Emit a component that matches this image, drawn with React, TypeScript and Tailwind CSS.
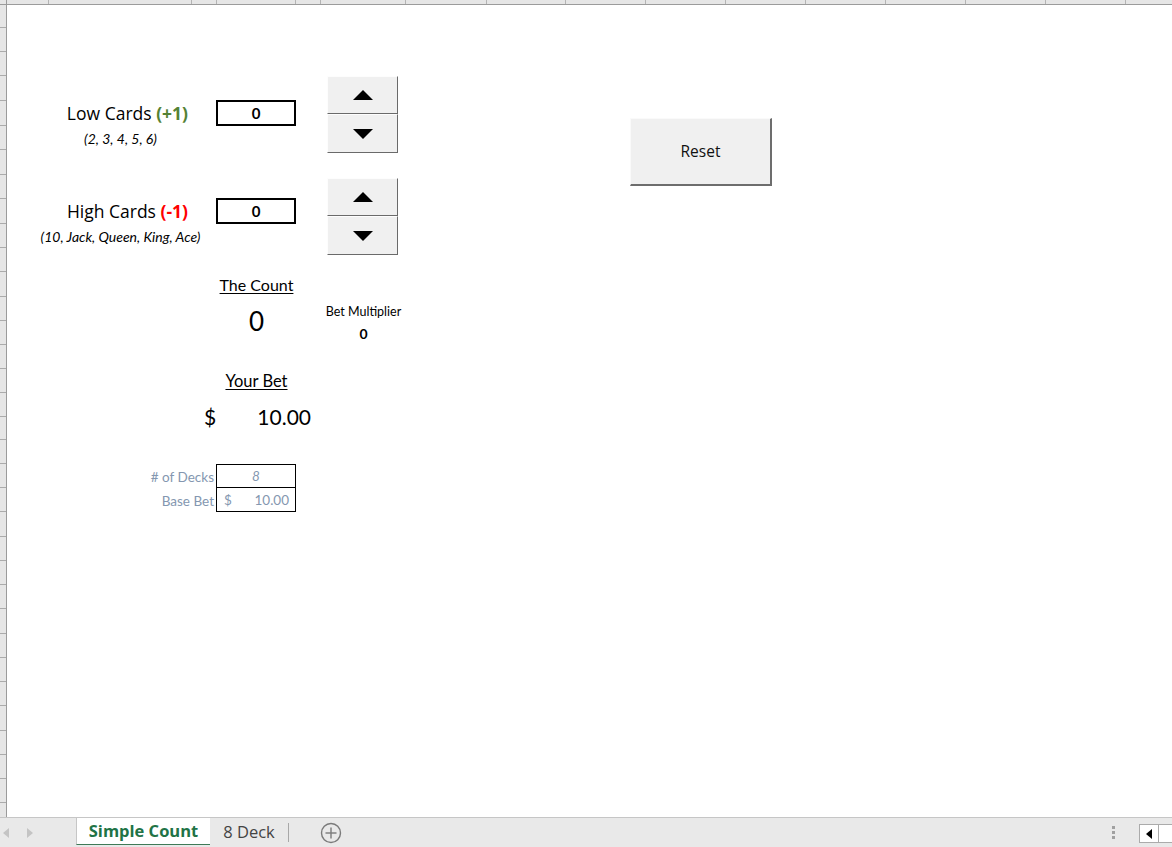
import React from "react";

const colWidths = [42, 143, 25, 79, 25, 85, 81, 79, 80, 80, 80, 80, 80, 80, 80, 80];
const rowHeights = [23, 24, 24, 25, 25, 24, 25, 24, 25, 24, 24, 25, 24, 24, 24, 24, 24, 23, 24, 24, 24, 25, 24, 24, 24, 25, 24, 24, 24, 25, 24, 24, 24, 25, 24, 24];

const body = { fontFamily: "Lato, 'Open Sans', 'Liberation Sans', sans-serif" };
const label = { fontFamily: "'Open Sans', 'Noto Sans', 'Liberation Sans', sans-serif" };

function Spinner({ top }: { top: number }) {
  return (
    <div className="absolute left-[327px] flex h-[77px] w-[71px] flex-col" style={{ top }}>
      <div className="flex h-[38px] items-center justify-center border-t border-l border-r border-b border-t-[#fdfdfd] border-l-[#fdfdfd] border-r-[#6a6a6a] border-b-[#6a6a6a] bg-[#f0f0f0]">
        <svg width="20" height="10" viewBox="0 0 20 10">
          <polygon points="10,0 20,10 0,10" fill="#000" />
        </svg>
      </div>
      <div className="flex h-[39px] items-center justify-center border-t border-l border-r border-b border-t-[#fdfdfd] border-l-[#fdfdfd] border-r-[#6a6a6a] border-b-[#6a6a6a] bg-[#f0f0f0]">
        <svg width="20" height="10" viewBox="0 0 20 10">
          <polygon points="0,0 20,0 10,10" fill="#000" />
        </svg>
      </div>
    </div>
  );
}

export default function App() {
  return (
    <div className="relative flex h-[847px] w-[1172px] flex-col overflow-hidden bg-white" style={body}>
      {/* column header strip */}
      <div className="flex h-[5px] shrink-0 border-b border-[#9b9b9b] bg-[#e6e6e6]">
        <div className="w-[7px] shrink-0 border-r border-[#9b9b9b]" />
        {colWidths.map((w, i) => (
          <div key={i} className="shrink-0 border-r border-[#b4b4b4]" style={{ width: w }} />
        ))}
      </div>
      <div className="flex min-h-0 flex-1">
        {/* row header strip */}
        <div className="flex w-[7px] shrink-0 flex-col overflow-hidden border-r border-[#9b9b9b] bg-[#e6e6e6]">
          {rowHeights.map((h, i) => (
            <div key={i} className="shrink-0 border-b border-[#ababab]" style={{ height: h }} />
          ))}
        </div>
        {/* sheet grid */}
        <div className="grid flex-1 grid-cols-[42px_143px_25px_79px_25px_85px_1fr] grid-rows-[23px_24px_24px_25px_25px_24px_25px_24px_25px_24px_24px_25px_24px_24px_24px_24px_24px_23px_24px_24px_24px_1fr] text-black">
          <div className="col-start-2 row-start-5 flex items-center justify-end whitespace-nowrap pr-[4px] text-[17.5px]" style={label}>
            Low Cards&nbsp;<span className="font-bold text-[#548235]">(+1)</span>
          </div>
          <div className="col-start-2 row-start-6 flex items-end justify-center whitespace-nowrap pb-[1px] text-[14px] italic">
            (2, 3, 4, 5, 6)
          </div>
          <div className="col-start-4 row-start-5 -ml-px mt-[-1px] flex items-center justify-center border-2 border-black text-[15px] font-bold">
            0
          </div>

          <div className="col-start-2 row-start-9 flex items-center justify-end whitespace-nowrap pr-[4px] text-[17.5px]" style={label}>
            High Cards&nbsp;<span className="font-bold text-[#ff0000]">(-1)</span>
          </div>
          <div className="col-start-2 row-start-10 flex items-end justify-center whitespace-nowrap pb-[1px] text-[14px] italic">
            (10, Jack, Queen, King, Ace)
          </div>
          <div className="col-start-4 row-start-9 -ml-px mt-[-1px] flex items-center justify-center border-2 border-black text-[15px] font-bold">
            0
          </div>

          <div className="col-start-4 row-start-12 flex items-center justify-center whitespace-nowrap text-[16px] underline underline-offset-2">
            The Count
          </div>
          <div className="col-start-4 row-start-13 row-span-2 flex items-center justify-center text-[26px]">
            0
          </div>
          <div className="col-start-6 row-start-13 -mb-[1px] flex items-end justify-center whitespace-nowrap text-[12.5px]">
            Bet Multiplier
          </div>
          <div className="col-start-6 row-start-14 flex items-center justify-center text-[14px] font-bold">
            0
          </div>

          <div className="col-start-4 row-start-16 flex items-center justify-center whitespace-nowrap text-[16.5px] underline underline-offset-2">
            Your Bet
          </div>
          <div className="col-start-3 col-span-3 row-start-17 row-span-2 flex items-center justify-between pl-[12px] pr-[10px] text-[21px]">
            <span>$</span>
            <span>10.00</span>
          </div>

          <div className="col-start-2 col-span-2 row-start-20 flex items-end justify-end whitespace-nowrap pb-[1px] pr-[3px] text-[13.5px] text-[#8497b0]">
            # of Decks
          </div>
          <div className="col-start-4 row-start-20 -ml-px flex items-end justify-center border border-black pb-[1px] text-[13.5px] italic text-[#8497b0]">
            8
          </div>
          <div className="col-start-2 col-span-2 row-start-21 flex items-end justify-end whitespace-nowrap pb-[1px] pr-[3px] text-[13.5px] text-[#8497b0]">
            Base Bet
          </div>
          <div className="col-start-4 row-start-21 -ml-px flex items-end justify-between border border-t-0 border-black pb-[1px] pl-[7px] pr-[6px] text-[13.5px] text-[#8497b0]">
            <span>$</span>
            <span>10.00</span>
          </div>
        </div>
      </div>

      {/* sheet tabs bar */}
      <div className="flex h-[30px] shrink-0 items-stretch border-t border-[#c6c6c6] bg-[#e9e9e9]">
        <div className="flex w-[76px] shrink-0 items-center gap-[18px] pl-[3px]">
          <svg width="6" height="10" viewBox="0 0 6 10"><polygon points="6,0 6,10 0,5" fill="#c4c4c4" /></svg>
          <svg width="6" height="10" viewBox="0 0 6 10"><polygon points="0,0 0,10 6,5" fill="#c4c4c4" /></svg>
        </div>
        <div className="mb-[2px] flex w-[134px] shrink-0 items-center justify-center border-b border-l border-b-[#3f7a57] border-l-[#c6c6c6] bg-white text-[16.5px] font-bold text-[#217346]" style={label}>
          Simple Count
        </div>
        <div className="flex w-[78px] shrink-0 items-center justify-center text-[16.5px] text-[#444]" style={label}>
          8 Deck
        </div>
        <div className="my-[5px] w-px bg-[#a8a8a8]" />
        <div className="flex w-[84px] items-center justify-center">
          <svg width="22" height="22" viewBox="0 0 22 22">
            <circle cx="11" cy="11" r="9.5" fill="none" stroke="#7a7a7a" strokeWidth="1.4" />
            <line x1="11" y1="5.5" x2="11" y2="16.5" stroke="#7a7a7a" strokeWidth="1.4" />
            <line x1="5.5" y1="11" x2="16.5" y2="11" stroke="#7a7a7a" strokeWidth="1.4" />
          </svg>
        </div>
        <div className="flex-1" />
        <div className="flex w-[14px] flex-col items-center justify-center gap-[2px]">
          <div className="h-[3px] w-[3px] bg-[#a0a0a0]" />
          <div className="h-[3px] w-[3px] bg-[#a0a0a0]" />
          <div className="h-[3px] w-[3px] bg-[#a0a0a0]" />
        </div>
        <div className="ml-[19px] mt-[6px] flex h-[19px] w-[20px] items-center justify-center border border-[#ababab] bg-white">
          <svg width="6" height="10" viewBox="0 0 6 10"><polygon points="6,0 6,10 0,5" fill="#000" /></svg>
        </div>
        <div className="mt-[6px] h-[19px] w-[13px] border-y border-[#ababab] bg-white" />
      </div>

      {/* floating shapes */}
      <Spinner top={76} />
      <Spinner top={178} />
      <div className="absolute left-[630px] top-[118px] flex h-[68px] w-[142px] items-center justify-center border-t border-l border-r-2 border-b-2 border-t-[#fafafa] border-l-[#fafafa] border-r-[#6d6d6d] border-b-[#6d6d6d] bg-[#f0f0f0] text-[15.5px] text-[#111]" style={{ fontFamily: "'Open Sans', 'Noto Sans', sans-serif" }}>
        Reset
      </div>
    </div>
  );
}
